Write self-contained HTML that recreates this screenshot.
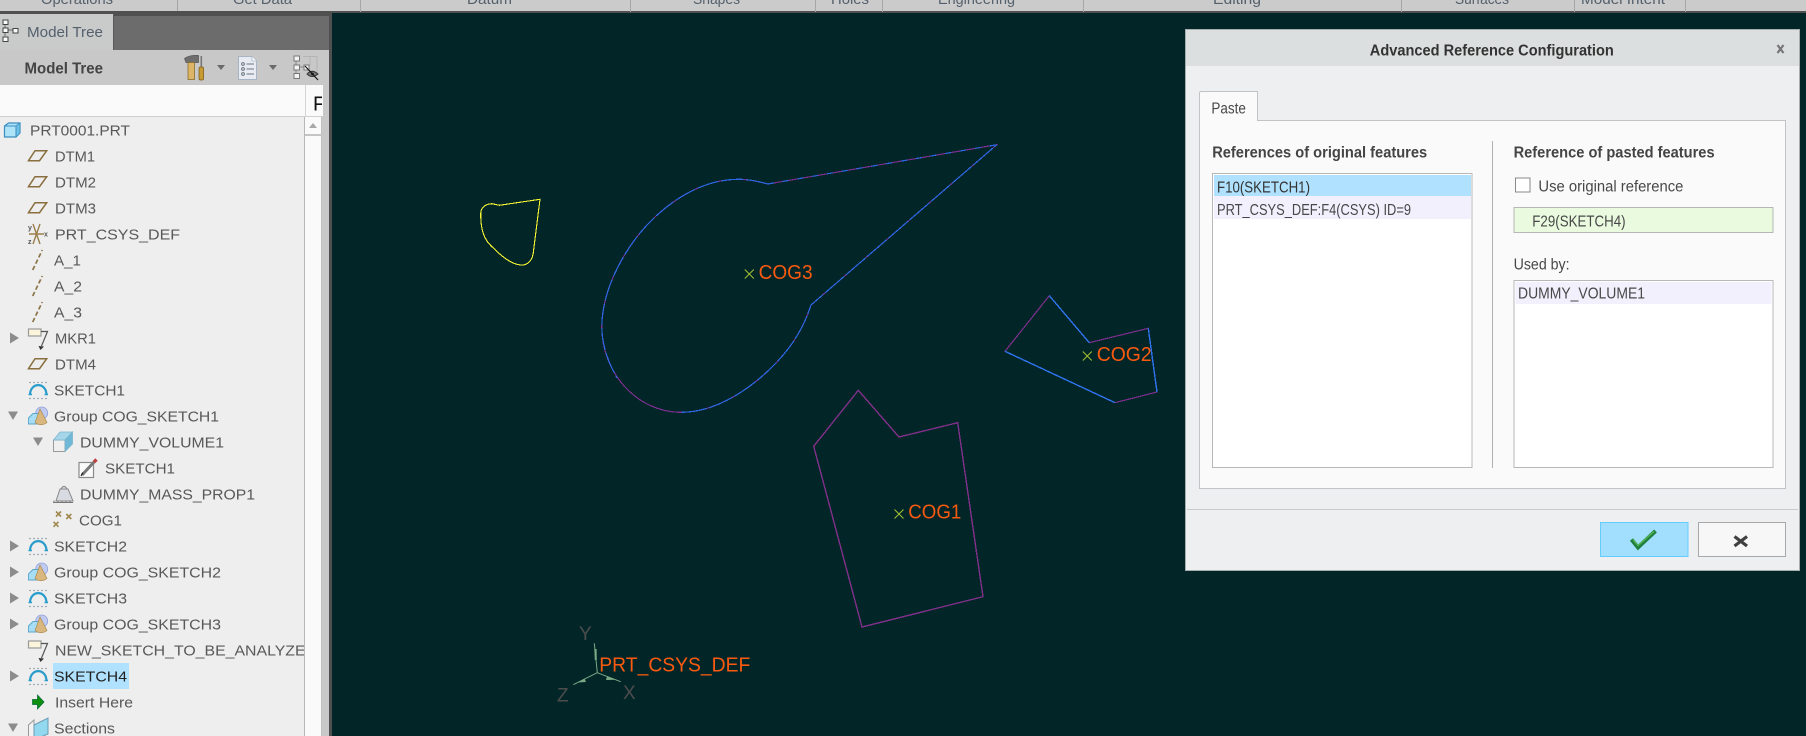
<!DOCTYPE html>
<html lang="en">
<head>
<meta charset="utf-8">
<title>Advanced Reference Configuration</title>
<style>
html,body{margin:0;padding:0;width:1806px;height:736px;overflow:hidden;background:#022628}
svg{display:block}
text{font-family:"Liberation Sans",sans-serif}
.t{font-size:15px;fill:#585858}
.d{font-size:15.5px;fill:#484848}
.h{font-size:15.5px;fill:#444;font-weight:bold}
.b{font-size:15px;fill:#54606c}
.c{font-size:20.5px;fill:#fa5a10}
.a{font-size:19px;fill:#4c4c4c}
</style>
</head>
<body>
<svg width="1806" height="736" viewBox="0 0 1806 736" xmlns="http://www.w3.org/2000/svg">
<defs>
<clipPath id="clipTree"><rect x="0" y="117" width="304" height="619"/></clipPath>
<clipPath id="clipF"><rect x="306" y="86" width="16" height="30"/></clipPath>
<clipPath id="clipTop"><rect x="0" y="0" width="1806" height="11"/></clipPath>
<g id="dtm"><path d="M28.5,4.7 L35,-5.3 L46.7,-5.3 L39.5,4.7 Z" fill="none" stroke="#8a6f3e" stroke-width="1.5"/></g>
<g id="axis"><path d="M32.7,10 L42.3,-10" fill="none" stroke="#8a7448" stroke-width="1.7" stroke-dasharray="4.5 2.5"/></g>
<g id="sk">
<path d="M29,-7.5 H47 M29,8.5 H47" stroke="#a4acb6" stroke-width="1.2" stroke-dasharray="2 2" fill="none"/>
<path d="M30,4.5 C30.5,-8 46,-8 46.5,4.5" fill="none" stroke="#2a9ccb" stroke-width="2.2"/>
<path d="M28.5,4.5 H32 M44.5,4.5 H48" stroke="#2a9ccb" stroke-width="1.4"/>
</g>
<g id="grp">
<circle cx="41.7" cy="-3" r="6" fill="#c0cbf2" stroke="#8f9fd8" stroke-width=".8"/>
<path d="M28.5,2 L33,-2.5 H41 V8 H28.5 Z" fill="#a8def5" stroke="#5aa4cc" stroke-width=".9"/>
<path d="M40,-7 L47,6.5 Q41,11 35,6.5 Z" fill="#d9b77e" stroke="#a98a50" stroke-width=".7"/>
</g>
<g id="mkr">
<rect x="28.5" y="-9" width="12.5" height="7" fill="#fbf5dc" stroke="#9a9a9a" stroke-width="1.2"/>
<path d="M41,-6.5 H47.5 L41.5,8" fill="none" stroke="#555" stroke-width="1.2"/>
<path d="M38.5,8 L44,8.5 L40.5,12 Z" fill="#333"/>
</g>
<g id="tri"><path d="M10,-5.5 L19,0 L10,5.5 Z" fill="#8c8c8c"/></g>
<g id="dn"><path d="M8,-4.5 H18 L13,4 Z" fill="#8c8c8c"/></g>
</defs>

<!-- background -->
<rect width="1806" height="736" fill="#022628"/>

<!-- top ribbon -->
<rect x="0" y="0" width="1806" height="11" fill="#cbcbcb"/>
<rect x="0" y="11" width="1806" height="2" fill="#505050"/>
<g clip-path="url(#clipTop)" fill="#54606c" font-size="15">
<text x="41" y="4" textLength="72" lengthAdjust="spacingAndGlyphs" class="b">Operations</text>
<text x="233" y="4" textLength="59" lengthAdjust="spacingAndGlyphs" class="b">Get Data</text>
<text x="467" y="4" textLength="45" lengthAdjust="spacingAndGlyphs" class="b">Datum</text>
<text x="693" y="4" textLength="47" lengthAdjust="spacingAndGlyphs" class="b">Shapes</text>
<text x="831" y="4" textLength="38" lengthAdjust="spacingAndGlyphs" class="b">Holes</text>
<text x="938" y="4" textLength="77" lengthAdjust="spacingAndGlyphs" class="b">Engineering</text>
<text x="1213" y="4" textLength="48" lengthAdjust="spacingAndGlyphs" class="b">Editing</text>
<text x="1455" y="4" textLength="54" lengthAdjust="spacingAndGlyphs" class="b">Surfaces</text>
<text x="1581" y="4" textLength="84" lengthAdjust="spacingAndGlyphs" class="b">Model Intent</text>
</g>
<g fill="#a6a6a6">
<rect x="177" y="0" width="1" height="12"/><rect x="360" y="0" width="1" height="12"/>
<rect x="630" y="0" width="1" height="12"/><rect x="815" y="0" width="1" height="12"/>
<rect x="882" y="0" width="1" height="12"/><rect x="1083" y="0" width="1" height="12"/>
<rect x="1401" y="0" width="1" height="12"/><rect x="1574" y="0" width="1" height="12"/>
<rect x="1685" y="0" width="1" height="12"/>
</g>

<!-- left panel frame -->
<rect x="0" y="11" width="332" height="725" fill="#505050"/>
<rect x="113" y="16" width="216" height="34" fill="#6c6c6c"/>
<rect x="0" y="14" width="113" height="36" fill="#c9cbcb"/>
<rect x="113" y="14" width="1" height="36" fill="#5a5a5a"/>
<rect x="0" y="50" width="329" height="686" fill="#c8c8c8"/>

<!-- tab tree icon -->
<path d="M5,24 V36 M5,30 H13" stroke="#666" stroke-width="1" fill="none"/>
<g fill="#fafafa" stroke="#444" stroke-width="1">
<rect x="3" y="20" width="5" height="4.5"/><rect x="3" y="28" width="5" height="4.5"/>
<rect x="13" y="28.5" width="5" height="4.5"/><rect x="3" y="37" width="5" height="4.5"/>
</g>
<text x="27" y="37" textLength="76" lengthAdjust="spacingAndGlyphs" class="b">Model Tree</text>

<!-- header -->
<text x="24.5" y="73.5" textLength="78.5" lengthAdjust="spacingAndGlyphs" class="h">Model Tree</text>
<!-- hammer & screwdriver -->
<path d="M184.5,58.5 Q190,54.5 198.5,55.5 L198.5,62.5 L186,62.5 Z" fill="#6e6e6e" stroke="#555" stroke-width=".7"/>
<rect x="188" y="62.5" width="6.5" height="17" fill="#dcb566" stroke="#8d6d2c" stroke-width=".8"/>
<rect x="200.5" y="56" width="1.6" height="11" fill="#777"/>
<rect x="199" y="67" width="4.6" height="13" rx="1.5" fill="#c79a32" stroke="#7a5a18" stroke-width=".7"/>
<path d="M217,65 H225 L221,70 Z" fill="#6a6a6a"/>
<!-- doc -->
<path d="M238.5,56.5 H252 L256.5,61 V79.5 H238.5 Z" fill="#e8ecf2" stroke="#a8b4c4" stroke-width="1"/>
<path d="M252,56.5 V61 H256.5" fill="#fff" stroke="#a8b4c4" stroke-width=".8"/>
<g fill="none" stroke="#6a7480" stroke-width="1">
<circle cx="243" cy="64" r="1.4"/><circle cx="243" cy="69" r="1.4"/><circle cx="243" cy="74" r="1.4"/>
<path d="M246.5,64 H254 M246.5,69 H254 M246.5,74 H254"/>
</g>
<path d="M269,65 H277 L273,70 Z" fill="#6a6a6a"/>
<!-- tree eye icon -->
<path d="M296,60 V75 M296,67 H304" stroke="#888" fill="none"/>
<g fill="#f4f4f4" stroke="#777" stroke-width="1">
<rect x="294" y="56" width="5.5" height="5"/><rect x="294" y="65" width="5.5" height="5"/><rect x="294" y="73.5" width="5.5" height="5"/>
<rect x="304" y="65" width="5" height="5"/>
</g>
<path d="M303,56.5 H317 V72 M310,56.5 V66" fill="none" stroke="#b4b4b4" stroke-width="1"/>
<path d="M307,74 Q312,68.5 318,74 Q312,79 307,74 Z" fill="#777" stroke="#333" stroke-width=".9"/>
<circle cx="312.5" cy="74" r="1.4" fill="#222"/>
<path d="M305,66 L318,80" stroke="#111" stroke-width="1.1"/>

<!-- filter row -->
<rect x="0" y="85" width="323" height="31" fill="#fafafa"/>
<rect x="305" y="85" width="1" height="31" fill="#d4d4d4"/>
<rect x="0" y="116" width="323" height="1" fill="#cfcfcf"/>
<text x="313" y="110.5" font-size="20" fill="#111" clip-path="url(#clipF)">F</text>

<!-- tree -->
<rect x="0" y="117" width="304" height="619" fill="#eeeeee"/>
<rect x="304" y="117" width="1" height="619" fill="#b8b8b8"/>
<rect x="305" y="117" width="17" height="619" fill="#fafafa"/>
<rect x="321" y="117" width="1" height="619" fill="#c0c0c0"/>
<rect x="305" y="134" width="17" height="2" fill="#c4c4c4"/>
<path d="M309,128 H317 L313,123 Z" fill="#a8a8a8"/>

<!-- highlight -->
<rect x="53" y="663" width="76" height="26" fill="#b0e2ff"/>

<g clip-path="url(#clipTree)">
<text x="30" y="135.7" textLength="100" lengthAdjust="spacingAndGlyphs" class="t">PRT0001.PRT</text>
<text x="55" y="161.5" textLength="40" lengthAdjust="spacingAndGlyphs" class="t">DTM1</text>
<text x="55" y="187.5" textLength="41" lengthAdjust="spacingAndGlyphs" class="t">DTM2</text>
<text x="55" y="213.5" textLength="41" lengthAdjust="spacingAndGlyphs" class="t">DTM3</text>
<text x="55" y="239.5" textLength="125" lengthAdjust="spacingAndGlyphs" class="t">PRT_CSYS_DEF</text>
<text x="54" y="265.5" textLength="27" lengthAdjust="spacingAndGlyphs" class="t">A_1</text>
<text x="54" y="291.5" textLength="28" lengthAdjust="spacingAndGlyphs" class="t">A_2</text>
<text x="54" y="317.5" textLength="28" lengthAdjust="spacingAndGlyphs" class="t">A_3</text>
<text x="55" y="343.5" textLength="41" lengthAdjust="spacingAndGlyphs" class="t">MKR1</text>
<text x="55" y="369.5" textLength="41" lengthAdjust="spacingAndGlyphs" class="t">DTM4</text>
<text x="54" y="395.5" textLength="71" lengthAdjust="spacingAndGlyphs" class="t">SKETCH1</text>
<text x="54" y="421.5" textLength="165" lengthAdjust="spacingAndGlyphs" class="t">Group COG_SKETCH1</text>
<text x="80" y="447.5" textLength="144" lengthAdjust="spacingAndGlyphs" class="t">DUMMY_VOLUME1</text>
<text x="105" y="473.5" textLength="70" lengthAdjust="spacingAndGlyphs" class="t">SKETCH1</text>
<text x="80" y="499.5" textLength="175" lengthAdjust="spacingAndGlyphs" class="t">DUMMY_MASS_PROP1</text>
<text x="79" y="525.5" textLength="43" lengthAdjust="spacingAndGlyphs" class="t">COG1</text>
<text x="54" y="551.5" textLength="73" lengthAdjust="spacingAndGlyphs" class="t">SKETCH2</text>
<text x="54" y="577.5" textLength="167" lengthAdjust="spacingAndGlyphs" class="t">Group COG_SKETCH2</text>
<text x="54" y="603.5" textLength="73" lengthAdjust="spacingAndGlyphs" class="t">SKETCH3</text>
<text x="54" y="629.5" textLength="167" lengthAdjust="spacingAndGlyphs" class="t">Group COG_SKETCH3</text>
<text x="55" y="655.5" textLength="262" lengthAdjust="spacingAndGlyphs" class="t">NEW_SKETCH_TO_BE_ANALYZED</text>
<text x="54" y="681.5" textLength="73" lengthAdjust="spacingAndGlyphs" class="t" style="fill:#222">SKETCH4</text>
<text x="55" y="707.5" textLength="78" lengthAdjust="spacingAndGlyphs" class="t">Insert Here</text>
<text x="54" y="733.5" textLength="61" lengthAdjust="spacingAndGlyphs" class="t">Sections</text>
</g>

<!-- root icon -->
<path d="M4.5,126 L8.5,123 H20 V133 L16,137 H4.5 Z" fill="#aee3f8" stroke="#3b8fc0" stroke-width="1.2"/>
<path d="M4.5,126 H16 L20,123 M16,126 V137" fill="none" stroke="#3b8fc0" stroke-width="1"/>
<path d="M16.5,126.5 L19.5,124 V133 L16.5,136 Z" fill="#6cc0e6"/>

<!-- row icons -->
<use href="#dtm" y="156"/><use href="#dtm" y="182"/><use href="#dtm" y="208"/><use href="#dtm" y="364"/>
<g transform="translate(0,234)">
<path d="M33,-10 L40,10 M40,-10 L33,10 M29,0 H44" stroke="#9a7f4c" stroke-width="1.4" fill="none"/>
<text x="28" y="-4" font-size="7" font-weight="bold" style="fill:#555">y</text>
<text x="28" y="10" font-size="7" font-weight="bold" style="fill:#555">z</text>
<text x="44" y="2.5" font-size="7" font-weight="bold" style="fill:#555">x</text>
</g>
<use href="#axis" y="260"/><use href="#axis" y="286"/><use href="#axis" y="312"/>
<use href="#mkr" y="338"/><use href="#mkr" y="650"/>
<use href="#sk" y="390"/><use href="#sk" y="546"/><use href="#sk" y="598"/><use href="#sk" y="676"/>
<use href="#grp" y="416"/><use href="#grp" y="572"/><use href="#grp" y="624"/>
<use href="#tri" y="338"/><use href="#tri" y="546"/><use href="#tri" y="572"/><use href="#tri" y="598"/><use href="#tri" y="624"/><use href="#tri" y="676"/>
<use href="#dn" y="416"/><use href="#dn" x="25" y="442"/><use href="#dn" y="728"/>
<!-- dummy volume -->
<g transform="translate(0,442)">
<rect x="53.5" y="-2" width="11.5" height="11.5" fill="#efefef" stroke="#9a9a9a"/>
<path d="M53.5,-2 L60,-10 H72.5 L65,-2 Z" fill="#a5d5e8" stroke="#7cb4cc" stroke-width=".8"/>
<path d="M65,-2 L72.5,-10 V2 L65,9.5 Z" fill="#6fb8d6" stroke="#7cb4cc" stroke-width=".8"/>
</g>
<!-- pencil -->
<g transform="translate(0,468)">
<rect x="79" y="-5.5" width="14.5" height="15" fill="#fafafa" stroke="#8a8a8a" stroke-width="1.2"/>
<path d="M82,7 L95,-7" stroke="#777" stroke-width="3"/>
<path d="M94,-6 L96.5,-8.5" stroke="#c04040" stroke-width="3.4"/>
<path d="M81,8 L83,4.5" stroke="#222" stroke-width="1.2"/>
</g>
<!-- mass -->
<g transform="translate(0,494)">
<path d="M56,7 L60,-5 H68 L73,7 Z" fill="#d8dce2" stroke="#888" stroke-width="1"/>
<path d="M61,-5 Q64,-10 67,-5" fill="none" stroke="#888" stroke-width="1.2"/>
<path d="M53,8.5 H73 M54,8.5 V6.5 M58,8.5 V6.5 M62,8.5 V6.5 M66,8.5 V6.5 M70,8.5 V6.5" stroke="#777" stroke-width="1" fill="none"/>
</g>
<!-- cog -->
<path d="M56,511.5 L61,516.5 M61,511.5 L56,516.5 M66.3,514 L71.3,519 M71.3,514 L66.3,519 M53.5,521.8 L58.5,526.8 M58.5,521.8 L53.5,526.8" stroke="#a08850" stroke-width="1.6" fill="none"/>
<!-- insert here -->
<path d="M32.5,699.5 H37.5 V695 L44,702 L37.5,709 V704.5 H32.5 Z" fill="#0d900d" stroke="#063" stroke-width=".7"/>
<!-- sections -->
<g transform="translate(0,728)">
<path d="M28.5,-3 L34,-8 V10 H28.5 Z" fill="#f2f2f2" stroke="#999"/>
<path d="M34,-3 L48,-10 V6 L38,10 H34 Z" fill="#92d8ee" stroke="#6a9cb4"/>
</g>

<!-- canvas geometry -->
<g fill="none" shape-rendering="crispEdges">
<path d="M540,199.3 L533.2,253.3 C532,262 526,265.5 520.7,265 C510,264 500,255 488.6,243.3 C482,235 480.7,225 480.7,213.3 C481,207 486,204 492,203.7 L499.3,205.3 Z" stroke="#f4f433" stroke-width="1.1"/>
<g stroke-width="1.2">
<path d="M767.9,184 C757,181 747,179 736.8,179.3 C700,180 665,203 640,233 C618,260 602,295 601.8,326.7 C601.8,372 636,412.3 681.4,412.3 C722,412.3 764,380 788.6,348.3 C800,333 806,320 811,305 L996.8,144.7 L767.9,184 Z" stroke="#7b2e8c"/>
<path d="M767.9,184 C757,181 747,179 736.8,179.3 C700,180 665,203 640,233 C618,260 602,295 601.8,326.7 C602,345 608,362 617,378" stroke="#2f66e6" stroke-dasharray="22 3"/>
<path d="M681.4,412.3 C722,412.3 764,380 788.6,348.3 C800,333 806,320 811,305 L996.8,144.7" stroke="#2f66e6" stroke-dasharray="26 2"/>
<path d="M767.9,184 L996.8,144.7" stroke="#2f66e6" stroke-dasharray="6 9"/>
</g>
<g stroke-width="1.2">
<path d="M1005,351.3 L1049.3,295.7 L1089.3,342.7 L1148.3,328.3 L1157,392 L1115,402.7 Z" stroke="#7b2e8c"/>
<path d="M1049.3,295.7 L1089.3,342.7 M1148.3,328.3 L1157,392 M1115,402.7 L1005,351.3" stroke="#2f72ee" stroke-width="1.4"/>
</g>
<path d="M858.3,390.3 L899,437 L957.7,422.7 L983,596.7 L862,627 L813.7,446.3 Z" stroke="#7f2f88" stroke-width="1.4"/>
</g>
<path d="M744.8,269.5 L753.8,278.5 M753.8,269.5 L744.8,278.5 M1082.8,351.5 L1091.8,360.5 M1091.8,351.5 L1082.8,360.5 M894.5,509.5 L903.5,518.5 M903.5,509.5 L894.5,518.5" stroke="#a8c030" stroke-width="1" fill="none"/>
<text x="758.6" y="279.2" textLength="54" lengthAdjust="spacingAndGlyphs" class="c">COG3</text>
<text x="1096.7" y="361" textLength="55" lengthAdjust="spacingAndGlyphs" class="c">COG2</text>
<text x="908.3" y="518.7" textLength="53" lengthAdjust="spacingAndGlyphs" class="c">COG1</text>

<!-- csys -->
<g stroke="#7aa884" fill="none" stroke-width="1">
<path d="M597.3,672.7 L594.3,643.3 M597.3,672.7 L620.7,681.7 M597.3,672.7 L573.3,684.7"/>
</g>
<path d="M594.3,649 L596.6,649 L596.8,660 L594.8,660 Z M607,676.5 L616,679.8 L606,680 Z M584.5,678.5 L577.5,682.5 L586,682 Z" fill="#7aa884"/>
<text x="599.3" y="671.7" textLength="151" lengthAdjust="spacingAndGlyphs" class="c">PRT_CSYS_DEF</text>
<text x="579" y="640" class="a">Y</text>
<text x="623" y="699" class="a">X</text>
<text x="557" y="701.5" class="a">Z</text>

<!-- dialog -->
<rect x="1185.5" y="29.5" width="614" height="541" fill="#eeeff1" stroke="#a8adad"/>
<rect x="1186" y="30" width="613" height="36" fill="#dcdfdf"/>
<text x="1369.8" y="55.3" textLength="244" lengthAdjust="spacingAndGlyphs" class="h" style="fill:#333">Advanced Reference Configuration</text>
<path d="M1777.5,45 L1783.5,53 M1783.5,45 L1777.5,53" stroke="#777" stroke-width="2.2" fill="none"/>

<!-- tab panel -->
<rect x="1199.5" y="120.5" width="586" height="368" fill="#fafafa" stroke="#c0c4c6"/>
<path d="M1199.5,121 V93 Q1199.5,91.5 1201,91.5 H1257.5 V121" fill="#fafafa" stroke="#c0c4c6"/>
<rect x="1200" y="119" width="57" height="3" fill="#fafafa"/>
<text x="1211.4" y="113.3" textLength="34.5" lengthAdjust="spacingAndGlyphs" class="d">Paste</text>

<text x="1212.2" y="157.3" textLength="215" lengthAdjust="spacingAndGlyphs" class="h">References of original features</text>
<text x="1513.6" y="157.3" textLength="201" lengthAdjust="spacingAndGlyphs" class="h">Reference of pasted features</text>
<rect x="1492" y="141" width="1" height="327" fill="#b0b0b0"/>

<!-- left list -->
<rect x="1212.5" y="173.5" width="259.5" height="294" fill="#fff" stroke="#b8b8b8"/>
<rect x="1214" y="175" width="257" height="21" fill="#b0e2ff"/>
<rect x="1214" y="196" width="257" height="23" fill="#f3f0fd"/>
<text x="1217" y="192.3" textLength="93" lengthAdjust="spacingAndGlyphs" class="d" style="fill:#333">F10(SKETCH1)</text>
<text x="1217" y="215" textLength="194" lengthAdjust="spacingAndGlyphs" class="d">PRT_CSYS_DEF:F4(CSYS) ID=9</text>

<!-- checkbox -->
<rect x="1515.5" y="178" width="14.5" height="14" fill="#fff" stroke="#8a8a8a"/>
<text x="1538.4" y="191.3" textLength="145" lengthAdjust="spacingAndGlyphs" class="d">Use original reference</text>

<!-- green field -->
<rect x="1514" y="207.5" width="259" height="25" fill="#e9fadf" stroke="#b4b8b4"/>
<text x="1532.3" y="226.7" textLength="93.3" lengthAdjust="spacingAndGlyphs" class="d">F29(SKETCH4)</text>

<text x="1513.6" y="269.3" textLength="56" lengthAdjust="spacingAndGlyphs" class="d">Used by:</text>

<!-- right list -->
<rect x="1514" y="280.5" width="259" height="187" fill="#fff" stroke="#b8b8b8"/>
<rect x="1515.5" y="282" width="256" height="22" fill="#f3f0fd"/>
<text x="1518" y="298.5" textLength="127" lengthAdjust="spacingAndGlyphs" class="d">DUMMY_VOLUME1</text>

<!-- footer -->
<rect x="1187" y="509" width="611" height="1" fill="#c8cacb"/>
<rect x="1600.5" y="522.5" width="87.5" height="34" fill="#a2dfff" stroke="#66ccff"/>
<rect x="1698.5" y="522.5" width="87" height="34" fill="#f7f7f7" stroke="#a8a8a8"/>
<path d="M1631.5,539.5 L1638,547.5 L1655.5,531" fill="none" stroke="#1f7f3f" stroke-width="4"/>
<path d="M1633,539.5 L1638,545.5 L1654,531.5" fill="none" stroke="#4fb04f" stroke-width="1.5"/>
<path d="M1734.5,536.5 L1747,546 M1747,536.5 L1734.5,546" stroke="#404040" stroke-width="3.2" fill="none"/>
</svg>
</body>
</html>
